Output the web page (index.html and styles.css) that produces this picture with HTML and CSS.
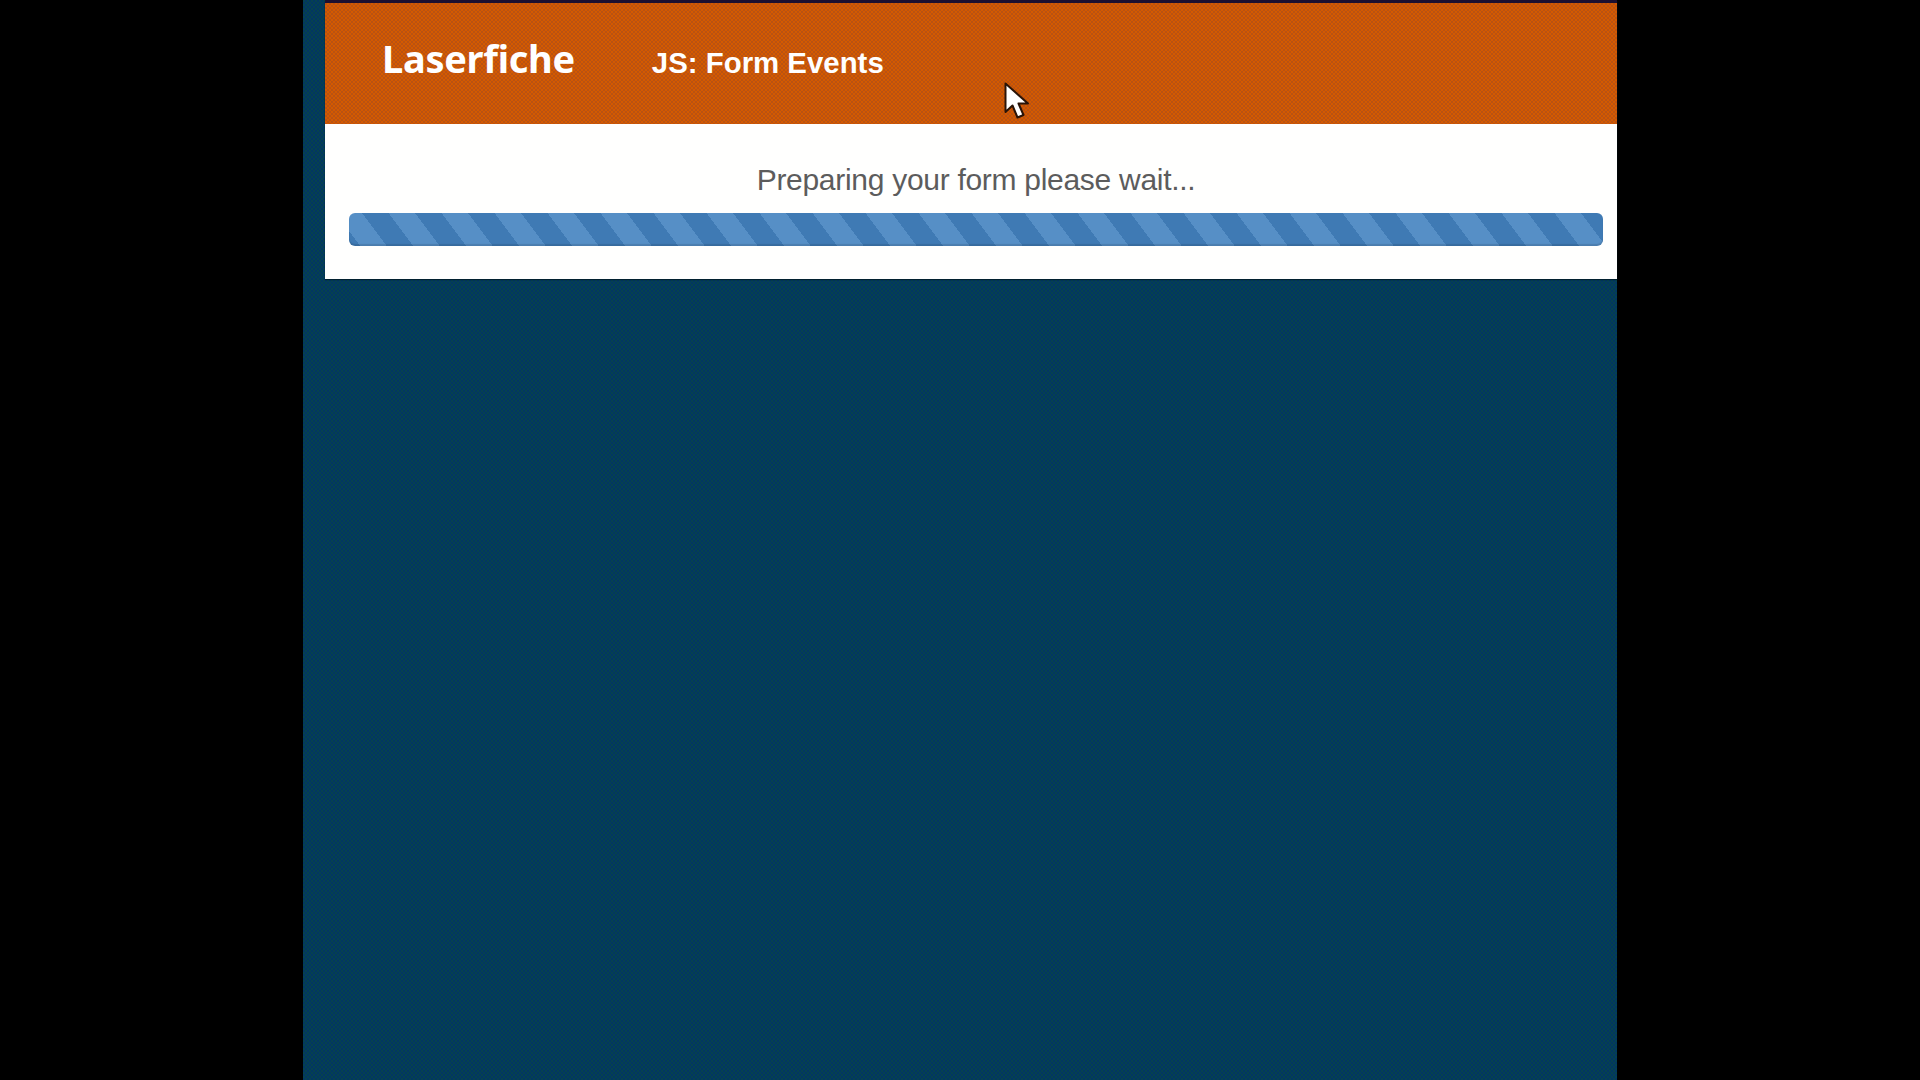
FILE: index.html
```html
<!DOCTYPE html>
<html lang="en">
<head>
<meta charset="utf-8">
<title>JS: Form Events</title>
<link rel="stylesheet" href="styles.css">
</head>
<body>
<main class="stage">
  <section class="card">
    <header class="banner">
      <span class="logo">Laserfiche</span>
      <h1 class="title">JS: Form Events</h1>
      <svg class="cursor" width="26" height="38" viewBox="0 0 26 38" aria-hidden="true">
        <path d="M1.5 1.5V30l7-6.5 5 12 6-2.5-5-11.5h9.5z" fill="#fff" stroke="#2a1408" stroke-width="2" stroke-linejoin="round"/>
      </svg>
    </header>
    <div class="loading">
      <p class="message">Preparing your form please wait...</p>
      <div class="progress"></div>
    </div>
  </section>
</main>
</body>
</html>
```
FILE: styles.css
```css
* { box-sizing: border-box; }
html, body { height: 100%; }
body {
  margin: 0;
  background: #000;
  overflow: hidden;
}
.stage {
  width: 1314px;
  height: 1080px;
  margin-left: 303px;
  padding-left: 22px;
  background: repeating-conic-gradient(#023663 0 25%, #06424f 0 50%) 0 0 / 4px 4px;
}
.card {
  box-shadow: 0 1px 1px #01202f;
}
.banner {
  position: relative;
  display: flex;
  align-items: baseline;
  gap: 77px;
  height: 124px;
  padding: 36px 0 0 57px;
  border-top: 3px solid #1c1030;
  background: repeating-conic-gradient(#d45a00 0 25%, #ba5212 0 50%) 0 0 / 4px 4px;
  color: #fff;
}
.logo {
  font-family: "Noto Sans", sans-serif;
  font-size: 38px;
  font-weight: 700;
  letter-spacing: -0.3px;
  line-height: 1;
}
.title {
  margin: 0;
  font-family: "Liberation Sans", sans-serif;
  font-size: 29.4px;
  font-weight: 700;
  line-height: 1;
}
.cursor {
  position: absolute;
  left: 679px;
  top: 79px;
}
.loading {
  display: flex;
  flex-direction: column;
  align-items: center;
  height: 155px;
  padding: 38px 14px 0 24px;
  background-color: #fffffe;
  background-image:
    radial-gradient(#ffffc8 0.5px, transparent 0.7px),
    radial-gradient(#ffffc8 0.5px, transparent 0.7px);
  background-size: 8px 8px;
  background-position: 0 0, 4px 4px;
}
.message {
  margin: 0 0 15px;
  font-family: "Liberation Sans", sans-serif;
  font-size: 30px;
  letter-spacing: -0.29px;
  line-height: 36px;
  color: #5c5c5c;
}
.progress {
  width: 100%;
  height: 33px;
  border-radius: 6px;
  background-color: #3f7ab4;
  background-image: repeating-linear-gradient(53.13deg, #3f7ab4 0 9px, #568fc6 9px 30.2px, #3f7ab4 30.2px 42.4px);
  box-shadow: inset 0 -2px 1px rgba(0, 0, 0, .12);
}
```
